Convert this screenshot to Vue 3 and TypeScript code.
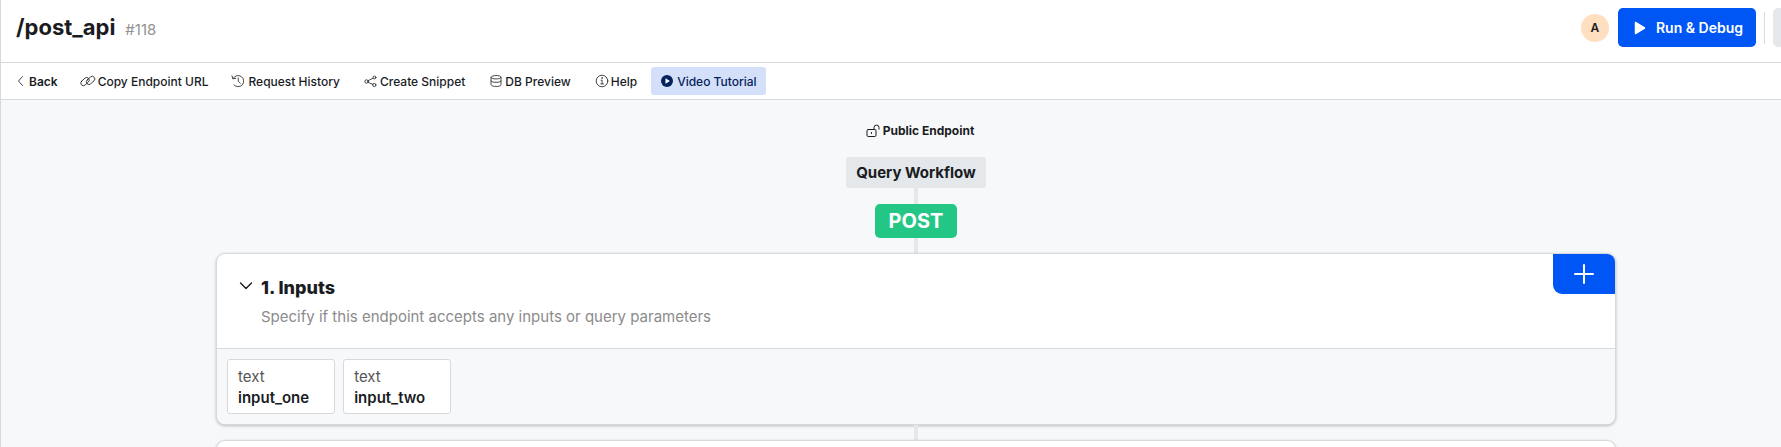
<script setup lang="ts">
import { ref } from 'vue'

interface Tool {
  id: string
  label: string
  primary?: boolean
  strong?: boolean
}

interface EndpointInput {
  type: string
  name: string
}

const tools: Tool[] = [
  { id: 'back', label: 'Back', strong: true },
  { id: 'link', label: 'Copy Endpoint URL' },
  { id: 'history', label: 'Request History' },
  { id: 'share', label: 'Create Snippet' },
  { id: 'db', label: 'DB Preview' },
  { id: 'help', label: 'Help' },
  { id: 'video', label: 'Video Tutorial', primary: true },
]

const inputs = ref<EndpointInput[]>([
  { type: 'text', name: 'input_one' },
  { type: 'text', name: 'input_two' },
])

const open = ref(true)
</script>

<template>
  <div class="viewport">
    <div class="page">
      <header class="header">
        <h1 class="title">/post_api</h1>
        <span class="number">#118</span>
        <div class="actions">
          <span class="avatar">A</span>
          <button type="button" class="run">
            <svg width="12" height="14" viewBox="0 0 12 14" aria-hidden="true">
              <path d="M1.5 1.5v11L10.5 7z" fill="#fff" stroke="#fff" stroke-width="1.5" stroke-linejoin="round" />
            </svg>
            Run &amp; Debug
          </button>
          <span class="divider"></span>
          <button type="button" class="more" aria-label="More"></button>
        </div>
      </header>

      <nav class="toolbar">
        <button
          v-for="tool in tools"
          :key="tool.id"
          type="button"
          class="tool"
          :class="{ primary: tool.primary, strong: tool.strong }"
        >
          <svg class="icon" viewBox="0 0 14 14" aria-hidden="true">
            <path v-if="tool.id === 'back'" d="M10.5 2.5 6.5 7l4 4.5" />
            <g v-else-if="tool.id === 'link'">
              <rect x="-4.8" y="-2.6" width="9.6" height="5.2" rx="2.6" transform="translate(4 7.6) rotate(-42)" />
              <rect x="-4.8" y="-2.6" width="9.6" height="5.2" rx="2.6" transform="translate(9.6 6.4) rotate(-42)" />
            </g>
            <g v-else-if="tool.id === 'history'">
              <path d="M2.2 4.3A5.6 5.6 0 1 1 3 11" />
              <path d="M1 1.8l.8 3 3-.4M7.3 4v3.3l2 1.9" />
            </g>
            <g v-else-if="tool.id === 'share'">
              <circle cx="3.5" cy="7.5" r="1.7" />
              <circle cx="11.5" cy="3.5" r="1.4" />
              <circle cx="11.3" cy="11" r="1.6" />
              <path d="M5.1 6.7l5-2.5M5.1 8.3l4.7 2.1" />
            </g>
            <g v-else-if="tool.id === 'db'">
              <path d="M3 3.2c0-2.3 10-2.3 10 0v7.6c0 2.3-10 2.3-10 0z" />
              <path d="M3 3.6c0 1.9 10 1.9 10 0M3 7c0 1.9 10 1.9 10 0" />
            </g>
            <g v-else-if="tool.id === 'help'">
              <circle cx="8" cy="7" r="5.8" />
              <path d="M7.1 6.2h1v3.600M6.8 9.9h2.6" />
              <circle cx="8" cy="4" r=".3" />
            </g>
            <g v-else>
              <circle class="solid" cx="7" cy="7" r="6" />
              <path class="play" d="M5.5 4.2v5.6L9.9 7z" />
            </g>
          </svg>
          {{ tool.label }}
        </button>
      </nav>

      <main class="canvas">
        <div class="access">
          <svg width="14" height="14" viewBox="0 0 14 14" aria-hidden="true">
            <rect x="1" y="5.5" width="9" height="7" rx="1.2" />
            <path d="M8 5.5V3.6a2.5 2.5 0 0 1 5 0v1.6M5.500 8.500v1" />
          </svg>
          Public Endpoint
        </div>
        <div class="workflow">Query Workflow</div>
        <div class="line"></div>
        <div class="method">POST</div>
        <div class="line"></div>

        <section class="card">
          <div class="card-head">
            <button
              type="button"
              class="toggle"
              aria-label="Toggle inputs"
              :aria-expanded="open"
              @click="open = !open"
            >
              <svg width="14" height="14" viewBox="0 0 14 14" aria-hidden="true">
                <path d="M1.5 4 7 9.5 12.5 4" />
              </svg>
            </button>
            <div class="card-text">
              <h2>1. Inputs</h2>
              <p>Specify if this endpoint accepts any inputs or query parameters</p>
            </div>
            <button type="button" class="add" aria-label="Add input">
              <svg width="22" height="22" viewBox="0 0 22 22" aria-hidden="true">
                <path d="M11 2v18M2 11h18" />
              </svg>
            </button>
          </div>
          <div v-if="open" class="inputs">
            <button v-for="input in inputs" :key="input.name" type="button" class="input">
              <span class="input-type">{{ input.type }}</span>
              <span class="input-name">{{ input.name }}</span>
            </button>
          </div>
        </section>
        <div class="line"></div>
        <section class="card next"></section>
      </main>
    </div>
  </div>
</template>

<style>
body {
  background: #f6f8fa;
}
</style>

<style scoped>
.viewport {
  height: 100vh;
  overflow: hidden;
  border-left: 1px solid #d6d9db;
  box-sizing: border-box;
  font-family: Inter, 'Liberation Sans', sans-serif;
  color: #1a1c1f;
  background: #f6f8fa;
}
.page {
  width: calc(100% + 50px);
}
button {
  margin: 0;
  border: 0;
  padding: 0;
  font-family: inherit;
  color: inherit;
  background: none;
  cursor: pointer;
}
svg {
  flex: none;
  fill: none;
  stroke: currentColor;
  stroke-linecap: round;
  stroke-linejoin: round;
}
.header {
  display: flex;
  align-items: baseline;
  gap: 10px;
  padding: 8px 16px 15px 15px;
  background: #fff;
  border-bottom: 1px solid #d6dadb;
}
.title {
  margin: 0;
  font-size: 22px;
  line-height: 38px;
  font-weight: 700;
}
.number {
  font-size: 15px;
  color: #929292;
}
.actions {
  display: flex;
  align-items: center;
  align-self: flex-start;
  gap: 8px;
  margin-left: auto;
}
.avatar {
  width: 28px;
  margin-right: 1px;
  border-radius: 50%;
  background: #fee0c0;
  font-size: 12px;
  line-height: 28px;
  font-weight: 600;
  text-align: center;
}
.run {
  display: flex;
  align-items: center;
  gap: 10px;
  height: 39px;
  padding: 0 13px 0 16px;
  border-radius: 5px;
  background: #0055f5;
  color: #fff;
  font-size: 14px;
  font-weight: 600;
}
.divider {
  width: 1px;
  height: 32px;
  background: #d9dcde;
}
.more {
  width: 42px;
  height: 39px;
  border-radius: 5px;
  background: #e5e8ea;
}
.toolbar {
  display: flex;
  gap: 5px;
  padding: 4px 2px;
  background: #fff;
  border-bottom: 1px solid #d6dadb;
}
.tool {
  display: flex;
  align-items: center;
  gap: 3px;
  height: 28px;
  padding: 0 9px;
  border-radius: 3px;
  font-size: 12px;
  font-weight: 500;
  white-space: nowrap;
}
.tool.strong {
  font-weight: 600;
}
.tool.primary {
  background: #d4e0fa;
  color: #06225c;
}
.icon {
  width: 14px;
  height: 14px;
  overflow: visible;
  stroke-width: 0.8;
}
.solid {
  fill: #06225c;
  stroke: none;
}
.play {
  fill: #fff;
  stroke: none;
}
.canvas {
  display: flex;
  flex-direction: column;
  align-items: center;
  padding: 22px 16px 0;
}
.access {
  display: flex;
  align-items: center;
  gap: 3px;
  margin: 0 0 17px 8px;
  font-size: 12px;
  line-height: 18px;
  font-weight: 700;
}
.workflow {
  padding: 0 10px;
  border-radius: 3px;
  background: #e5e8ea;
  font-size: 15px;
  line-height: 31px;
  font-weight: 700;
}
.line {
  width: 4px;
  height: 15px;
  background: #e5e8ea;
}
.workflow + .line {
  height: 16px;
}
.method {
  padding: 0 14px;
  border-radius: 5px;
  background: #24c685;
  color: #fff;
  font-size: 20px;
  line-height: 34px;
  font-weight: 700;
}
.card {
  width: 100%;
  max-width: 1400px;
  box-sizing: border-box;
  overflow: hidden;
  border: 1px solid #d6dadd;
  border-radius: 9px;
  background: #fff;
  box-shadow: 0 1px 3px rgba(0, 0, 0, 0.25);
}
.card-head {
  display: flex;
  align-items: flex-start;
  padding-left: 22px;
  border-bottom: 1px solid #d6dadd;
}
.toggle {
  display: flex;
  margin: 25px 8px 0 0;
}
.toggle svg {
  stroke-width: 1.4;
}
.card-text {
  flex: 1;
  padding: 22px 0 20px;
}
h2 {
  margin: 0;
  font-size: 18px;
  line-height: 24px;
  font-weight: 800;
}
p {
  margin: 6px 0 0;
  font-size: 15px;
  line-height: 22px;
  color: #8b8b8b;
}
.add {
  display: flex;
  align-items: center;
  justify-content: center;
  width: 62px;
  height: 40px;
  border-bottom-left-radius: 9px;
  background: #0055f5;
  color: #fff;
}
.add svg {
  stroke-width: 2;
}
.inputs {
  display: flex;
  gap: 8px;
  padding: 10px;
  background: #f6f8fa;
}
.input {
  display: flex;
  flex-direction: column;
  padding: 6px 25px 5px 10px;
  border: 1px solid #d6dadd;
  border-radius: 3px;
  background: #fff;
  font-size: 15px;
  line-height: 21px;
  text-align: left;
}
.input-type {
  color: #555;
}
.input-name {
  font-weight: 600;
}
.next {
  height: 120px;
}
</style>
